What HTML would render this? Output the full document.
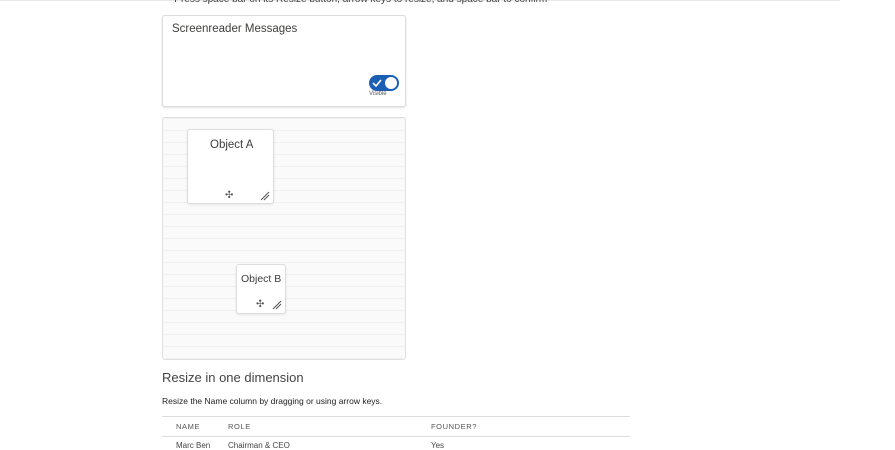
<!DOCTYPE html>
<html><head><style>
body{margin:0;width:895px;height:445px;overflow:hidden;background:#fff;font-family:"Liberation Sans",sans-serif;color:#3e3e3c;position:relative}
.a{position:absolute}
.card{background:#fff;border:1px solid #dcdcdc;border-radius:3px;box-shadow:0 1px 2px rgba(0,0,0,.12)}
.grid{background-color:#fafafa;background-image:linear-gradient(#f0f0f0 1px,transparent 1px);background-size:100% 12px;border:1px solid #e0e0e0;border-radius:3px}
.obj{background:#fff;border:1px solid #dcdcdc;border-radius:3px;box-shadow:0 1px 2px rgba(0,0,0,.08)}
</style></head><body>
<div class="a" style="left:0;top:0;width:840px;height:1px;background:#e8e8e8"></div>
<div class="a" style="left:168px;top:-6px;font-size:10px;color:#3e3e3c;white-space:nowrap">• Press space bar on its Resize button, arrow keys to resize, and space bar to confirm</div>

<div class="a card" style="left:162px;top:15px;width:242px;height:90px"></div>
<div class="a" style="left:172px;top:23px;font-size:11.5px">Screenreader Messages</div>
<div class="a" style="left:369px;top:75px;width:30px;height:16px;border-radius:8px;background:#1b5fb5"></div>
<div class="a" style="left:385px;top:77px;width:12px;height:12px;border-radius:6px;background:#fff"></div>
<svg class="a" style="left:372px;top:79px" width="10" height="8"><path d="M1 4 L4 7 L9 1" stroke="#fff" stroke-width="1.6" fill="none"/></svg>
<div class="a" style="left:369px;top:91px;font-size:6px;color:#555">Visible</div>

<div class="a grid" style="left:162px;top:117px;width:242px;height:241px"></div>
<div class="a obj" style="left:187px;top:129px;width:85px;height:73px"></div>
<div class="a" style="left:210px;top:139px;font-size:11.5px">Object A</div>
<div class="a" style="left:225px;top:190px;font-size:10px;color:#555">✣</div>
<svg class="a" style="left:260px;top:191px" width="10" height="10"><path d="M1 9 L9 1 M4 9 L9 4" stroke="#555" stroke-width="1"/></svg>
<div class="a obj" style="left:236px;top:264px;width:48px;height:48px"></div>
<div class="a" style="left:241px;top:273px;font-size:10.5px">Object B</div>
<div class="a" style="left:256px;top:299px;font-size:10px;color:#555">✣</div>
<svg class="a" style="left:272px;top:300px" width="10" height="10"><path d="M1 9 L9 1 M4 9 L9 4" stroke="#555" stroke-width="1"/></svg>

<div class="a" style="left:162px;top:370px;font-size:13px;color:#444">Resize in one dimension</div>
<div class="a" style="left:162px;top:396px;font-size:8.5px;color:#222">Resize the Name column by dragging or using arrow keys.</div>
<div class="a" style="left:162px;top:416px;width:468px;height:1px;background:#ddd"></div>
<div class="a" style="left:176px;top:422px;font-size:7.5px;letter-spacing:.6px;color:#555">NAME</div>
<div class="a" style="left:228px;top:422px;font-size:7.5px;letter-spacing:.6px;color:#555">ROLE</div>
<div class="a" style="left:431px;top:422px;font-size:7.5px;letter-spacing:.6px;color:#555">FOUNDER?</div>
<div class="a" style="left:162px;top:436px;width:468px;height:1px;background:#ddd"></div>
<div class="a" style="left:176px;top:441px;font-size:8px;color:#444">Marc Ben</div>
<div class="a" style="left:228px;top:441px;font-size:8px;color:#444">Chairman &amp; CEO</div>
<div class="a" style="left:431px;top:441px;font-size:8px;color:#444">Yes</div>
</body></html>
